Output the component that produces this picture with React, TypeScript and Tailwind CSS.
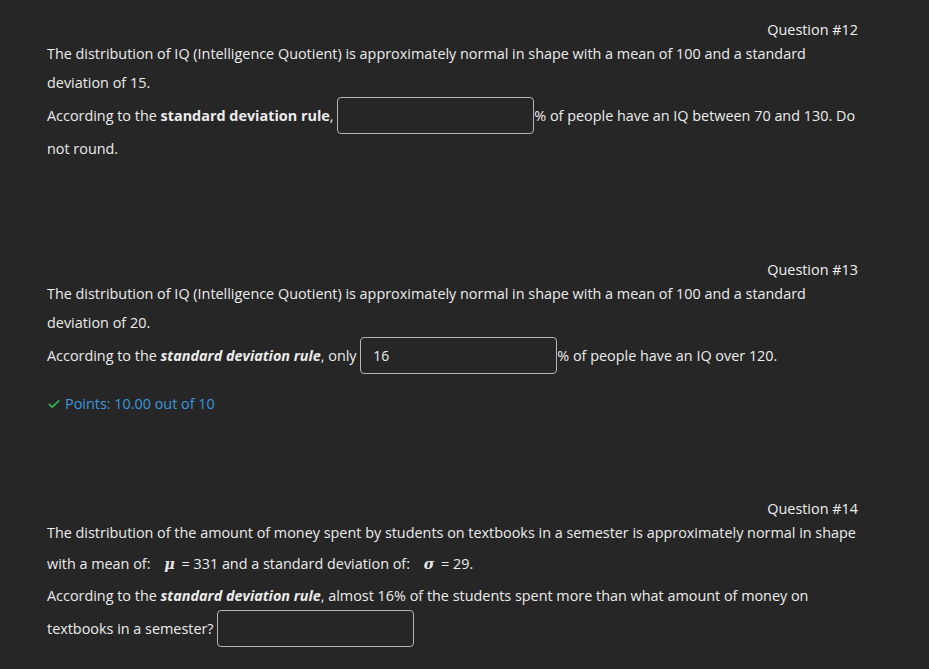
import React from 'react';

function Blank({ value }: { value?: string }) {
  return (
    <input
      type="text"
      defaultValue={value}
      className="inline-block h-[37px] w-[197px] rounded-[4px] border border-[#b5b5b5] bg-transparent px-3 text-[14px] text-[#ececec] outline-none"
    />
  );
}

function Header({ n }: { n: number }) {
  return <div className="text-right leading-[18px] text-[#f0f0f0]">Question #{n}</div>;
}

function MathVar({ ch }: { ch: string }) {
  return (
    <span
      className="ml-[10px] mr-[3px] inline-block font-bold italic leading-[34px] text-[#e6e6e6]"
      style={{ fontFamily: '"DejaVu Serif", "Liberation Serif", serif' }}
    >
      {ch}
    </span>
  );
}

export default function App() {
  return (
    <div
      className="min-h-screen w-full bg-[#262626] text-[14.4px] leading-[29px] text-[#ececec]"
      style={{ fontFamily: '"Open Sans", "Liberation Sans", sans-serif' }}
    >
      <div className="ml-[47px] w-[811px] pt-[21px]">
        <section>
          <Header n={12} />
          <p>
            The distribution of IQ (Intelligence Quotient) is approximately normal in shape with a mean of 100 and a standard
            deviation of 15.
          </p>
          <p>
            According to the <strong className="font-bold">standard deviation rule</strong>,{' '}
            <Blank />% of people have an IQ between 70 and 130. Do not round.
          </p>
        </section>

        <section className="mt-[98px]">
          <Header n={13} />
          <p>
            The distribution of IQ (Intelligence Quotient) is approximately normal in shape with a mean of 100 and a standard
            deviation of 20.
          </p>
          <p>
            According to the <strong className="font-bold italic">standard deviation rule</strong>, only{' '}
            <Blank value="16" />% of people have an IQ over 120.
          </p>
          <div className="mt-[15px] flex items-center gap-[4px] text-[#3d96dd]">
            <svg width="14" height="14" viewBox="0 0 24 24" fill="none" stroke="#2fb35a" strokeWidth="3" strokeLinecap="round" strokeLinejoin="round">
              <path d="M4 12.5l5 5L20 6.5" />
            </svg>
            <span>Points: 10.00 out of 10</span>
          </div>
        </section>

        <section className="mt-[82px]">
          <Header n={14} />
          <p>
            The distribution of the amount of money spent by students on textbooks in a semester is approximately normal in shape
            with a mean of: <MathVar ch="μ" /> = 331 and a standard deviation of: <MathVar ch="σ" /> = 29.
          </p>
          <p>
            According to the <strong className="font-bold italic">standard deviation rule</strong>, almost 16% of the students spent
            more than what amount of money on textbooks in a semester? <Blank />
          </p>
        </section>
      </div>
    </div>
  );
}
